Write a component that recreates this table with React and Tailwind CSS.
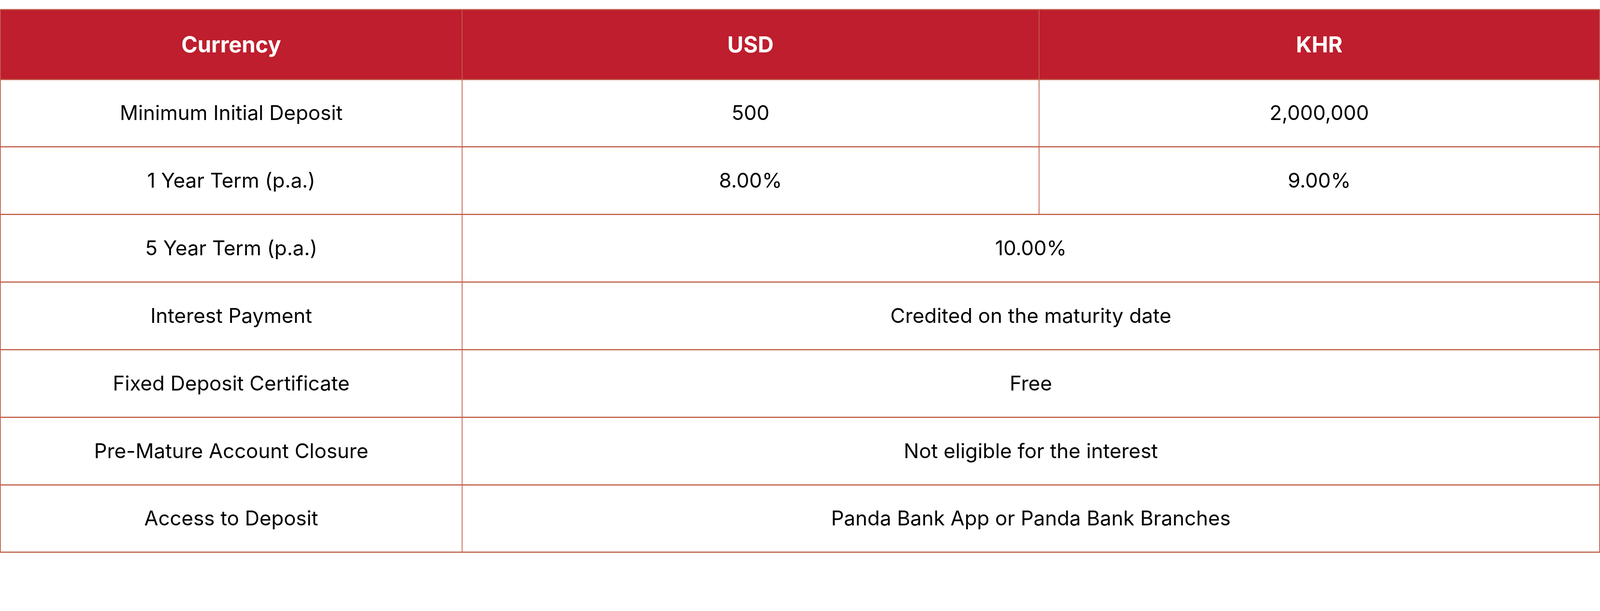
const rows = [
  { label: 'Minimum Initial Deposit', usd: '500', khr: '2,000,000' },
  { label: '1 Year Term (p.a.)', usd: '8.00%', khr: '9.00%' },
  { label: '5 Year Term (p.a.)', both: '10.00%' },
  { label: 'Interest Payment', both: 'Credited on the maturity date' },
  { label: 'Fixed Deposit Certificate', both: 'Free' },
  { label: 'Pre-Mature Account Closure', both: 'Not eligible for the interest' },
  { label: 'Access to Deposit', both: 'Panda Bank App or Panda Bank Branches' },
]

const cell = 'border-x-2 border-y-[3px] border-[#c0604a] p-0 leading-none'

export default function App() {
  return (
    <div className="w-full bg-white pt-[0.56vw]" style={{ fontFamily: 'Inter, "Noto Sans", sans-serif' }}>
      <table className="w-full table-fixed border-collapse text-center">
        <colgroup>
          <col style={{ width: '28.87%' }} />
          <col style={{ width: '36.07%' }} />
          <col />
        </colgroup>
        <thead>
          <tr className="h-[4.36vw] bg-[#be1e2d] text-white">
            <th className={`${cell} text-[1.37vw] font-bold`}>Currency</th>
            <th className={`${cell} text-[1.37vw] font-bold`}>USD</th>
            <th className={`${cell} text-[1.37vw] font-bold`}>KHR</th>
          </tr>
        </thead>
        <tbody className="text-[1.27vw] text-black">
          {rows.map((r) => (
            <tr key={r.label} className="h-[4.22vw]">
              <td className={cell}>{r.label}</td>
              {r.both ? (
                <td colSpan={2} className={cell}>{r.both}</td>
              ) : (
                <>
                  <td className={cell}>{r.usd}</td>
                  <td className={cell}>{r.khr}</td>
                </>
              )}
            </tr>
          ))}
        </tbody>
      </table>
    </div>
  )
}
